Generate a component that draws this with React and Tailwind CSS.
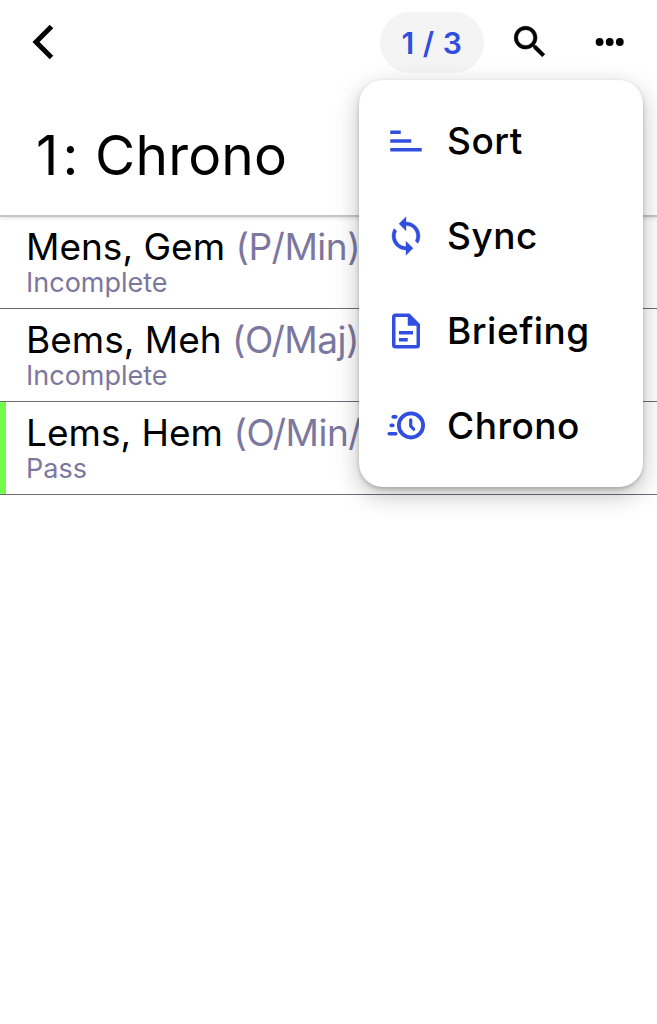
import React from 'react';

const entries = [
  { name: 'Mens, Gem', info: '(P/Min)', status: 'Incomplete' },
  { name: 'Bems, Meh', info: '(O/Maj)', status: 'Incomplete' },
  { name: 'Lems, Hem', info: '(O/Min/Maj)', status: 'Pass', passed: true },
];

const SortIcon = () => (
  <svg viewBox="0 0 24 24" className="w-[42px] h-[42px]" fill="currentColor">
    <path d="M3 18h18v-2H3v2zM3 6v2h6V6H3zm0 7h12v-2H3v2z" />
  </svg>
);

const SyncIcon = () => (
  <svg viewBox="0 0 24 24" className="w-[42px] h-[42px]" fill="currentColor" stroke="currentColor" strokeWidth="0.2">
    <path d="M12 4V1L8 5l4 4V6c3.31 0 6 2.69 6 6 0 1.01-.25 1.97-.7 2.8l1.46 1.46C19.54 15.03 20 13.57 20 12c0-4.42-3.58-8-8-8zm0 14c-3.31 0-6-2.69-6-6 0-1.01.25-1.97.7-2.8L5.24 7.74C4.46 8.97 4 10.43 4 12c0 4.42 3.58 8 8 8v3l4-4-4-4v3z" />
  </svg>
);

const BriefingIcon = () => (
  <svg viewBox="0 0 24 24" className="w-[42px] h-[42px]" fill="currentColor">
    <path d="M6 2a2 2 0 0 0-2 2v16a2 2 0 0 0 2 2h12a2 2 0 0 0 2-2V8l-6-6H6m0 2h7v5h5v11H6V4m2 8v2h8v-2H8m0 4v2h5v-2H8z" />
  </svg>
);

const ChronoIcon = () => (
  <svg viewBox="0 0 42 42" className="w-[42px] h-[42px]" fill="none" stroke="currentColor" strokeWidth="3.8">
    <circle cx="26" cy="20.4" r="12.1" />
    <path d="M25.7 14.8v6.4l3 3" strokeWidth="3.2" strokeLinecap="round" strokeLinejoin="round" />
    <path d="M8.2 11.9h2.6M6.2 20.4h1.6M4.2 28.8h6.6" strokeWidth="3.6" strokeLinecap="round" />
  </svg>
);

const menuItems = [
  { label: 'Sort', icon: SortIcon },
  { label: 'Sync', icon: SyncIcon },
  { label: 'Briefing', icon: BriefingIcon },
  { label: 'Chrono', icon: ChronoIcon },
];

const App = () => {
  return (
    <div className="relative w-full h-screen overflow-hidden bg-white text-black font-['Inter',sans-serif]">
      <header className="h-[217px] border-b-2 border-[#c6c6c6] shadow-[0_1px_4px_rgba(0,0,0,0.14)]">
        <div className="flex items-center h-[84px] pl-[31px] pr-[29px]">
          <button aria-label="Back">
            <svg viewBox="0 0 24 36" className="w-6 h-9" fill="none" stroke="currentColor" strokeWidth="5">
              <path d="M20.5 2.5L5 18l15.5 15.5" />
            </svg>
          </button>
          <div className="flex items-center ml-auto">
            <div className="flex items-center justify-center w-[104px] h-[61px] pt-[2px] rounded-full bg-[#f4f4f4] text-[#304fe0] text-[30px] font-semibold tracking-[0.5px]">
              1 / 3
            </div>
            <button aria-label="Search" className="ml-[25px]">
              <svg viewBox="0 0 24 24" className="w-[42px] h-[42px]" fill="currentColor" stroke="currentColor" strokeWidth="0.3">
                <path d="M15.5 14h-.79l-.28-.27C15.41 12.59 16 11.11 16 9.5 16 5.91 13.09 3 9.5 3S3 5.91 3 9.5 5.91 16 9.5 16c1.61 0 3.09-.59 4.23-1.57l.27.28v.79l5 4.99L20.49 19l-4.99-5zm-6 0C7.01 14 5 11.99 5 9.5S7.01 5 9.5 5 14 7.01 14 9.5 11.99 14 9.5 14z" />
              </svg>
            </button>
            <button aria-label="More" className="ml-[41px]">
              <svg viewBox="0 0 36 12" className="w-9 h-3" fill="currentColor">
                <circle cx="7.6" cy="6" r="3.9" />
                <circle cx="17.7" cy="6" r="3.9" />
                <circle cx="27.8" cy="6" r="3.9" />
              </svg>
            </button>
          </div>
        </div>
        <h1 className="pl-[36px] pt-[35px] text-[55px] leading-[72px] tracking-[0.2px] [word-spacing:1px] whitespace-nowrap">
          <span className="tracking-[4px]">1</span>: Chrono
        </h1>
      </header>

      <ul>
        {entries.map((entry) => (
          <li
            key={entry.name}
            className={`flex h-[93px] pt-[9px] border-b border-[#6d6a7a] first:h-[92px] first:pt-[8px] ${entry.passed ? 'bg-[linear-gradient(to_right,#75fb4c_6px,transparent_6px)]' : ''}`}
          >
            <div className="pl-[26px]">
              <p className="text-[37px] leading-[44px] whitespace-nowrap">
                {entry.name} <span className="text-[#7c779e] tracking-[-0.5px]">{entry.info}</span>
              </p>
              <p className="text-[27px] leading-[27px] text-[#7c779e]">{entry.status}</p>
            </div>
          </li>
        ))}
      </ul>

      <nav className="absolute top-[80px] right-[14px] w-[284px] h-[407px] pt-[13px] rounded-[24px] bg-white shadow-[0_2px_4px_rgba(0,0,0,0.2),0_8px_24px_rgba(0,0,0,0.25)]">
        {menuItems.map(({ label, icon: Icon }) => (
          <button key={label} className="flex items-center w-full h-[95px] pl-[26px]">
            <span className="text-[#304fe0]">
              <Icon />
            </span>
            <span className="ml-[20px] text-[37px] font-medium tracking-[0.5px] whitespace-nowrap">{label}</span>
          </button>
        ))}
      </nav>
    </div>
  );
};

export default App;
